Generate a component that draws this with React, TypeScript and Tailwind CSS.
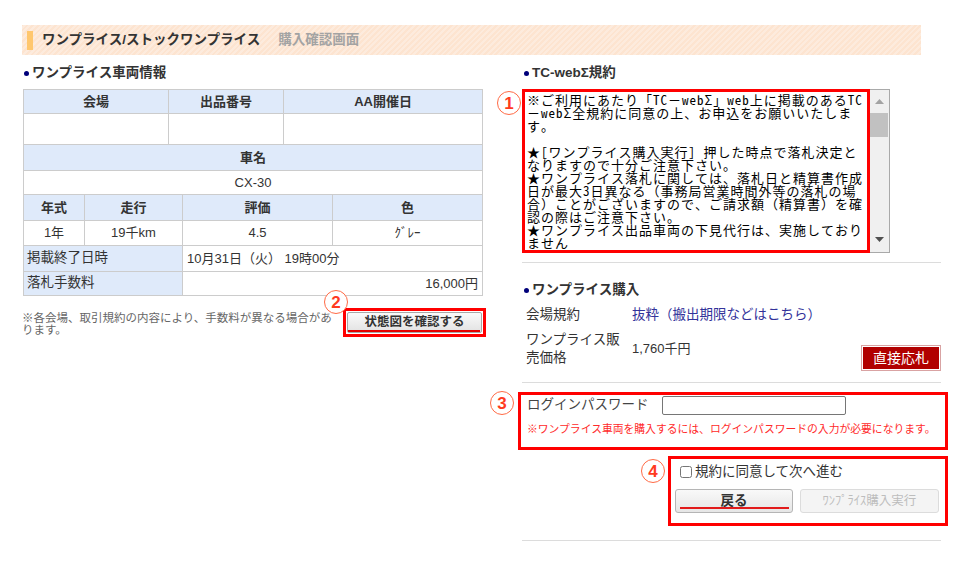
import React from 'react';

const termsLines = [
  '※ご利用にあたり「TC－webΣ」web上に掲載のあるTC',
  '－webΣ全規約に同意の上、お申込をお願いいたしま',
  'す。',
  '',
  '★[ワンプライス購入実行] 押した時点で落札決定と',
  'なりますので十分ご注意下さい。',
  '★ワンプライス落札に関しては、落札日と精算書作成',
  '日が最大3日異なる（事務局営業時間外等の落札の場',
  '合）ことがございますので、ご請求額（精算書）を確',
  '認の際はご注意下さい。',
  '★ワンプライス出品車両の下見代行は、実施しており',
  'ません',
];

function Marker({ n, className }: { n: string; className: string }) {
  return (
    <div
      className={`absolute w-[24px] h-[24px] rounded-full border-[1.5px] border-[#ff6a45] bg-white text-[#ff3b1f] text-[17px] font-bold leading-none flex items-center justify-center ${className}`}
    >
      {n}
    </div>
  );
}

function Heading({ children }: { children: React.ReactNode }) {
  return (
    <div className="h-[18px] flex items-center text-[13.5px] font-bold text-[#333]">
      <span className="inline-block w-[5px] h-[5px] rounded-full bg-[#00007a] mr-[3px] ml-[2px]" />
      {children}
    </div>
  );
}

const th = 'bg-[#dfeafa] border border-[#cccccc] text-center font-bold text-[13px]';
const td = 'bg-white border border-[#cccccc] text-center text-[13px]';

export default function App() {
  return (
    <div className="w-[968px] h-[561px] overflow-hidden bg-white text-[#333] font-['Liberation_Sans','Noto_Sans_CJK_JP',sans-serif]">
      <div className="pt-[25px] pl-[22px]">
        {/* Title bar */}
        <div className="w-[899px] h-[30px] flex items-center bg-[repeating-linear-gradient(-45deg,#fde4d0_0px,#fde4d0_2px,#fdebdd_2px,#fdebdd_4px)]">
          <div className="w-[6px] h-[19px] bg-[#ffc76e] ml-[5px]" />
          <span className="ml-[9px] text-[13.5px] font-bold text-[#333]">ワンプライス/ストックワンプライス</span>
          <span className="ml-[18px] text-[13.5px] font-bold text-[#a3a3a3]">購入確認画面</span>
        </div>

        <div className="flex">
          {/* Left column */}
          <div className="w-[460px] shrink-0 mt-[9px]">
            <Heading>ワンプライス車両情報</Heading>
            <table className="mt-[7px] ml-[1px] w-[459px] table-fixed border-collapse">
              <colgroup>
                <col className="w-[61px]" />
                <col className="w-[84px]" />
                <col className="w-[14px]" />
                <col className="w-[101px]" />
                <col className="w-[49px]" />
                <col className="w-[150px]" />
              </colgroup>
              <tbody>
                <tr className="h-[24px]">
                  <td colSpan={2} className={th}>会場</td>
                  <td colSpan={2} className={th}>出品番号</td>
                  <td colSpan={2} className={th}>AA開催日</td>
                </tr>
                <tr className="h-[31px]">
                  <td colSpan={2} className={td}></td>
                  <td colSpan={2} className={td}></td>
                  <td colSpan={2} className={td}></td>
                </tr>
                <tr className="h-[26px]">
                  <td colSpan={6} className={th}>車名</td>
                </tr>
                <tr className="h-[24px]">
                  <td colSpan={6} className={td}>CX-30</td>
                </tr>
                <tr className="h-[26px]">
                  <td className={th}>年式</td>
                  <td colSpan={2} className={th}>走行</td>
                  <td colSpan={2} className={th}>評価</td>
                  <td className={th}>色</td>
                </tr>
                <tr className="h-[25px]">
                  <td className={td}>1年</td>
                  <td colSpan={2} className={td}>19千km</td>
                  <td colSpan={2} className={td}>4.5</td>
                  <td className={td}>ｸﾞﾚｰ</td>
                </tr>
                <tr className="h-[26px]">
                  <td colSpan={3} className="bg-[#dfeafa] border border-[#cccccc] text-left pl-[3px] text-[13.5px]">掲載終了日時</td>
                  <td colSpan={3} className="bg-white border border-[#cccccc] text-left pl-[4px] text-[13px]">10月31日（火） 19時00分</td>
                </tr>
                <tr className="h-[24px]">
                  <td colSpan={3} className="bg-[#dfeafa] border border-[#cccccc] text-left pl-[3px] text-[13.5px]">落札手数料</td>
                  <td colSpan={3} className="bg-white border border-[#cccccc] text-right pr-[4px] text-[13px]">16,000円</td>
                </tr>
              </tbody>
            </table>

            <div className="flex items-start mt-[14px]">
              <p className="w-[321px] shrink-0 text-[11.5px] leading-[12px] text-[#666] mt-[2px]">
                ※各会場、取引規約の内容により、手数料が異なる場合があ
                <br />
                ります。
              </p>
              <div className="relative shrink-0 -mt-[2px] border-[3px] border-[#ff0000] p-[1px]">
                <Marker n="2" className="-left-[22px] -top-[21px]" />
                <button className="relative w-[135px] h-[21px] border border-[#a8a8a8] rounded-[2px] bg-gradient-to-b from-[#fafafa] to-[#e2e2e2] text-[12.5px] font-bold text-[#333] flex items-center justify-center">
                  状態図を確認する
                  <span className="absolute left-[0px] right-[1px] bottom-[0px] h-[2px] bg-[#e60000]" />
                </button>
              </div>
            </div>
          </div>

          {/* Right column */}
          <div className="ml-[40px] w-[419px] shrink-0 mt-[9px]">
            <Heading>TC-webΣ規約</Heading>
            <div className="relative mt-[7px] flex h-[164px] w-[368px]">
              <Marker n="1" className="-left-[25px] top-[2px]" />
              <div className="w-[348px] h-full border-[3px] border-[#ff0000] pl-[2px] pt-[1px] overflow-hidden font-['Noto_Sans_Mono_CJK_JP','Noto_Sans_CJK_JP',monospace] text-[13px] tracking-[1px] leading-[13px] text-black">
                {termsLines.map((line, i) => (
                  <div key={i} className="h-[13px] whitespace-nowrap">{line}</div>
                ))}
              </div>
              <div className="w-[20px] h-full border border-l-0 border-[#a9a9a9] bg-[#f0f0f0] flex flex-col">
                <div className="h-[22px] flex items-center justify-center">
                  <svg width="9" height="5" viewBox="0 0 9 5"><polygon points="4.5,0 9,5 0,5" fill="#a3a3a3" /></svg>
                </div>
                <div className="mt-[1px] h-[24px] w-[18px] bg-[#c1c1c1]" />
                <div className="flex-1" />
                <div className="h-[26px] flex items-center justify-center">
                  <svg width="9" height="5" viewBox="0 0 9 5"><polygon points="0,0 9,0 4.5,5" fill="#505050" /></svg>
                </div>
              </div>
            </div>

            <div className="mt-[9px] h-px bg-[#dcdcdc]" />

            <div className="mt-[18px]">
              <Heading>ワンプライス購入</Heading>
            </div>
            <div className="mt-[6px] h-[20px] flex items-center text-[13.5px]">
              <span className="w-[110px] pl-[4px]">会場規約</span>
              <span className="text-[#33339a]">抜粋（搬出期限などはこちら）</span>
            </div>
            <div className="mt-[6px] flex items-start text-[13.5px]">
              <div className="w-[110px] pl-[4px] leading-[18px]">
                ワンプライス販
                <br />
                売価格
              </div>
              <div className="h-[36px] flex items-center text-[13px]">1,760千円</div>
              <div className="ml-auto mt-[14px] w-[80px] h-[26px] border border-[#d9a3a3] p-[1px] bg-white">
                <div className="w-full h-full bg-[#b10000] text-white text-[14px] flex items-center justify-center">直接応札</div>
              </div>
            </div>

            <div className="mt-[11px] h-px bg-[#dcdcdc]" />

            <div className="-ml-[4px] w-[430px]">
              <div className="relative mt-[9px] border-[3px] border-[#ff0000] pt-[0px] pl-[6px] pb-[11px]">
                <Marker n="3" className="-left-[31px] -top-[4px]" />
                <div className="h-[20px] flex items-center text-[13.5px] text-[#444]">
                  <span className="w-[135px]">ログインパスワード</span>
                  <input type="password" className="w-[184px] h-[19px] border border-[#767676] rounded-[2px] bg-white" />
                </div>
                <div className="mt-[7px] h-[14px] leading-[14px] text-[10.8px] text-[#ff2a2a] whitespace-nowrap">
                  ※ワンプライス車両を購入するには、ログインパスワードの入力が必要になります。
                </div>
              </div>

              <div className="relative mt-[6px] ml-auto w-[280px] border-[3px] border-[#ff0000] pt-[3px] pb-[10px]">
                <Marker n="4" className="-left-[30px] top-[0px]" />
                <label className="h-[20px] pl-[9px] flex items-center text-[13.5px] text-[#333]">
                  <input type="checkbox" className="w-[12px] h-[12px] m-0 mr-[3px]" />
                  規約に同意して次へ進む
                </label>
                <div className="mt-[7px] pl-[4px] pr-[6px] flex gap-[7px]">
                  <button className="relative w-[118px] h-[24px] border border-[#b5b5b5] rounded-[3px] bg-gradient-to-b from-[#f9f9f9] to-[#e6e6e6] text-[13.5px] font-bold text-[#333] flex items-center justify-center">
                    戻る
                    <span className="absolute left-[4px] right-[3px] bottom-[3px] h-[2px] bg-[#e21b1b]" />
                  </button>
                  <button disabled className="w-[139px] h-[24px] border border-[#dcdcdc] rounded-[3px] bg-[#f4f4f4] text-[12.5px] text-[#bdbdbd] flex items-center justify-center">
                    ﾜﾝﾌﾟﾗｲｽ購入実行
                  </button>
                </div>
              </div>
            </div>

            <div className="mt-[14px] h-px bg-[#dcdcdc]" />
          </div>
        </div>
      </div>
    </div>
  );
}
